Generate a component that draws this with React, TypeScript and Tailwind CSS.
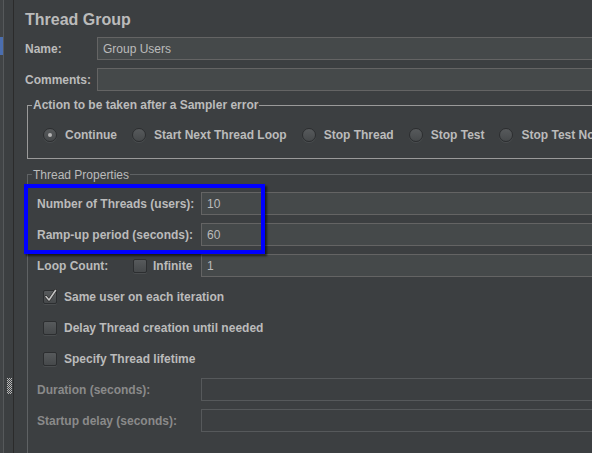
import React from "react";

type FieldProps = { value?: string; disabled?: boolean };

const Field = ({ value, disabled }: FieldProps) => (
  <div
    className={
      disabled
        ? "flex-1 h-full flex items-center pl-[5px] border border-[#56595b] bg-[#3c3f41]"
        : "flex-1 h-full flex items-center pl-[5px] border border-[#646464] bg-[#45494a] font-normal"
    }
  >
    {value}
  </div>
);

const Radio = ({ label, checked }: { label: string; checked?: boolean }) => (
  <div className="flex items-center gap-[8px]">
    <span className="w-[14px] h-[14px] rounded-full border border-[#2c2e30] bg-gradient-to-b from-[#575a5c] to-[#46494b] flex items-center justify-center shadow-[0_1px_0_#4a4d4f]">
      {checked && <span className="w-[4px] h-[4px] rounded-full bg-[#b4b4b4]" />}
    </span>
    <span className="font-bold">{label}</span>
  </div>
);

const Box = ({ checked }: { checked?: boolean }) => (
  <span className="relative w-[14px] h-[14px] shrink-0 rounded-[2px] border border-[#2c2e30] bg-gradient-to-b from-[#575a5c] to-[#46494b] shadow-[0_1px_0_#4a4d4f]">
    {checked && (
      <svg className="absolute left-[-1px] top-[-2px] overflow-visible" width="14" height="14" viewBox="0 0 14 14">
        <path d="M3 7.5 L6 11 L12.5 1.5" fill="none" stroke="#2b2b2b" strokeWidth="3" strokeLinecap="round" strokeLinejoin="round" />
        <path d="M3 7.5 L6 11 L12.5 1.5" fill="none" stroke="#c4c4c4" strokeWidth="1.6" strokeLinecap="round" strokeLinejoin="round" />
      </svg>
    )}
  </span>
);

const Check = ({ label, checked }: { label: string; checked?: boolean }) => (
  <div className="h-[23px] flex items-center gap-[7px] pl-[15px]">
    <Box checked={checked} />
    <span className="font-bold">{label}</span>
  </div>
);

const Row = ({ label, value, disabled }: { label: string; value?: string; disabled?: boolean }) => (
  <div className="h-[23px] flex items-center pl-[9px]">
    <span className={disabled ? "w-[164px] font-bold text-[#8a8a8a]" : "w-[164px] font-bold"}>{label}</span>
    <Field value={value} disabled={disabled} />
  </div>
);

// splitter grip: checkered dots
const Grip = () => {
  const dots = [];
  for (let y = 0; y < 16; y++) {
    for (let x = 0; x < 5; x++) {
      if ((x + y) % 2 === 0) dots.push(<rect key={`${x}-${y}`} x={x} y={y} width="1" height="1" fill="#b8b8b8" />);
    }
  }
  return (
    <svg className="mt-[378px]" width="5" height="16" viewBox="0 0 5 16">
      {dots}
    </svg>
  );
};

export default function App() {
  return (
    <div className="w-[592px] h-[453px] overflow-hidden flex bg-[#3c3f41] text-[12px] text-[#bbbbbb] font-['Liberation_Sans',Arial,sans-serif]">
      {/* tree edge + splitter */}
      <div className="w-[3px] shrink-0 bg-[#414446] flex flex-col">
        <div className="mt-[37px] h-[18px] bg-[#4b6eaf]" />
      </div>
      <div className="w-px shrink-0 bg-[#56595b]" />
      <div className="w-[9px] shrink-0 flex flex-col pl-[3px]">
        <Grip />
      </div>
      <div className="w-px shrink-0 bg-[#2b2b2b]" />

      <div className="w-[700px] shrink-0 pl-[11px] pt-[10px] flex flex-col">
        <div className="h-[20px] leading-[20px] text-[16px] font-bold">Thread Group</div>

        <div className="mt-[7px] h-[23px] flex items-center">
          <span className="w-[72px] font-bold">Name:</span>
          <Field value="Group Users" />
        </div>
        <div className="mt-[8px] h-[23px] flex items-center">
          <span className="w-[72px] font-bold">Comments:</span>
          <Field />
        </div>

        {/* sampler error action */}
        <div className="mt-[14px] ml-[2px] h-[54px] flex flex-col border border-r-0 border-[#9a9a9a]">
          <div className="-mt-[8px] ml-[4px] flex">
            <span className="bg-[#3c3f41] px-px leading-[14px] font-bold">Action to be taken after a Sampler error</span>
          </div>
          <div className="flex-1 flex items-center gap-[15px] pl-[15px]">
            <Radio label="Continue" checked />
            <Radio label="Start Next Thread Loop" />
            <Radio label="Stop Thread" />
            <Radio label="Stop Test" />
            <Radio label="Stop Test Now" />
          </div>
        </div>

        {/* thread properties */}
        <div className="relative mt-[15px] ml-[2px] flex-1 flex flex-col border-l border-t border-[#5f6264]">
          <div className="-mt-[7px] ml-[4px] flex">
            <span className="bg-[#3c3f41] px-px leading-[14px]">Thread Properties</span>
          </div>
          <div className="mt-[10px] flex flex-col gap-[8px]">
            <Row label="Number of Threads (users):" value="10" />
            <Row label="Ramp-up period (seconds):" value="60" />
            <div className="h-[23px] flex items-center pl-[9px]">
              <div className="w-[164px] flex items-center">
                <span className="w-[96px] font-bold">Loop Count:</span>
                <Box />
                <span className="ml-[6px] font-bold">Infinite</span>
              </div>
              <Field value="1" />
            </div>
            <Check label="Same user on each iteration" checked />
            <Check label="Delay Thread creation until needed" />
            <Check label="Specify Thread lifetime" />
            <Row label="Duration (seconds):" disabled />
            <Row label="Startup delay (seconds):" disabled />
          </div>

          {/* highlight frame */}
          <div className="absolute left-[-4px] top-[9px] w-[241px] h-[70px] border-4 border-[#0000ff] shadow-[2px_2px_2px_rgba(0,0,0,0.6)]" />
        </div>
      </div>
    </div>
  );
}
